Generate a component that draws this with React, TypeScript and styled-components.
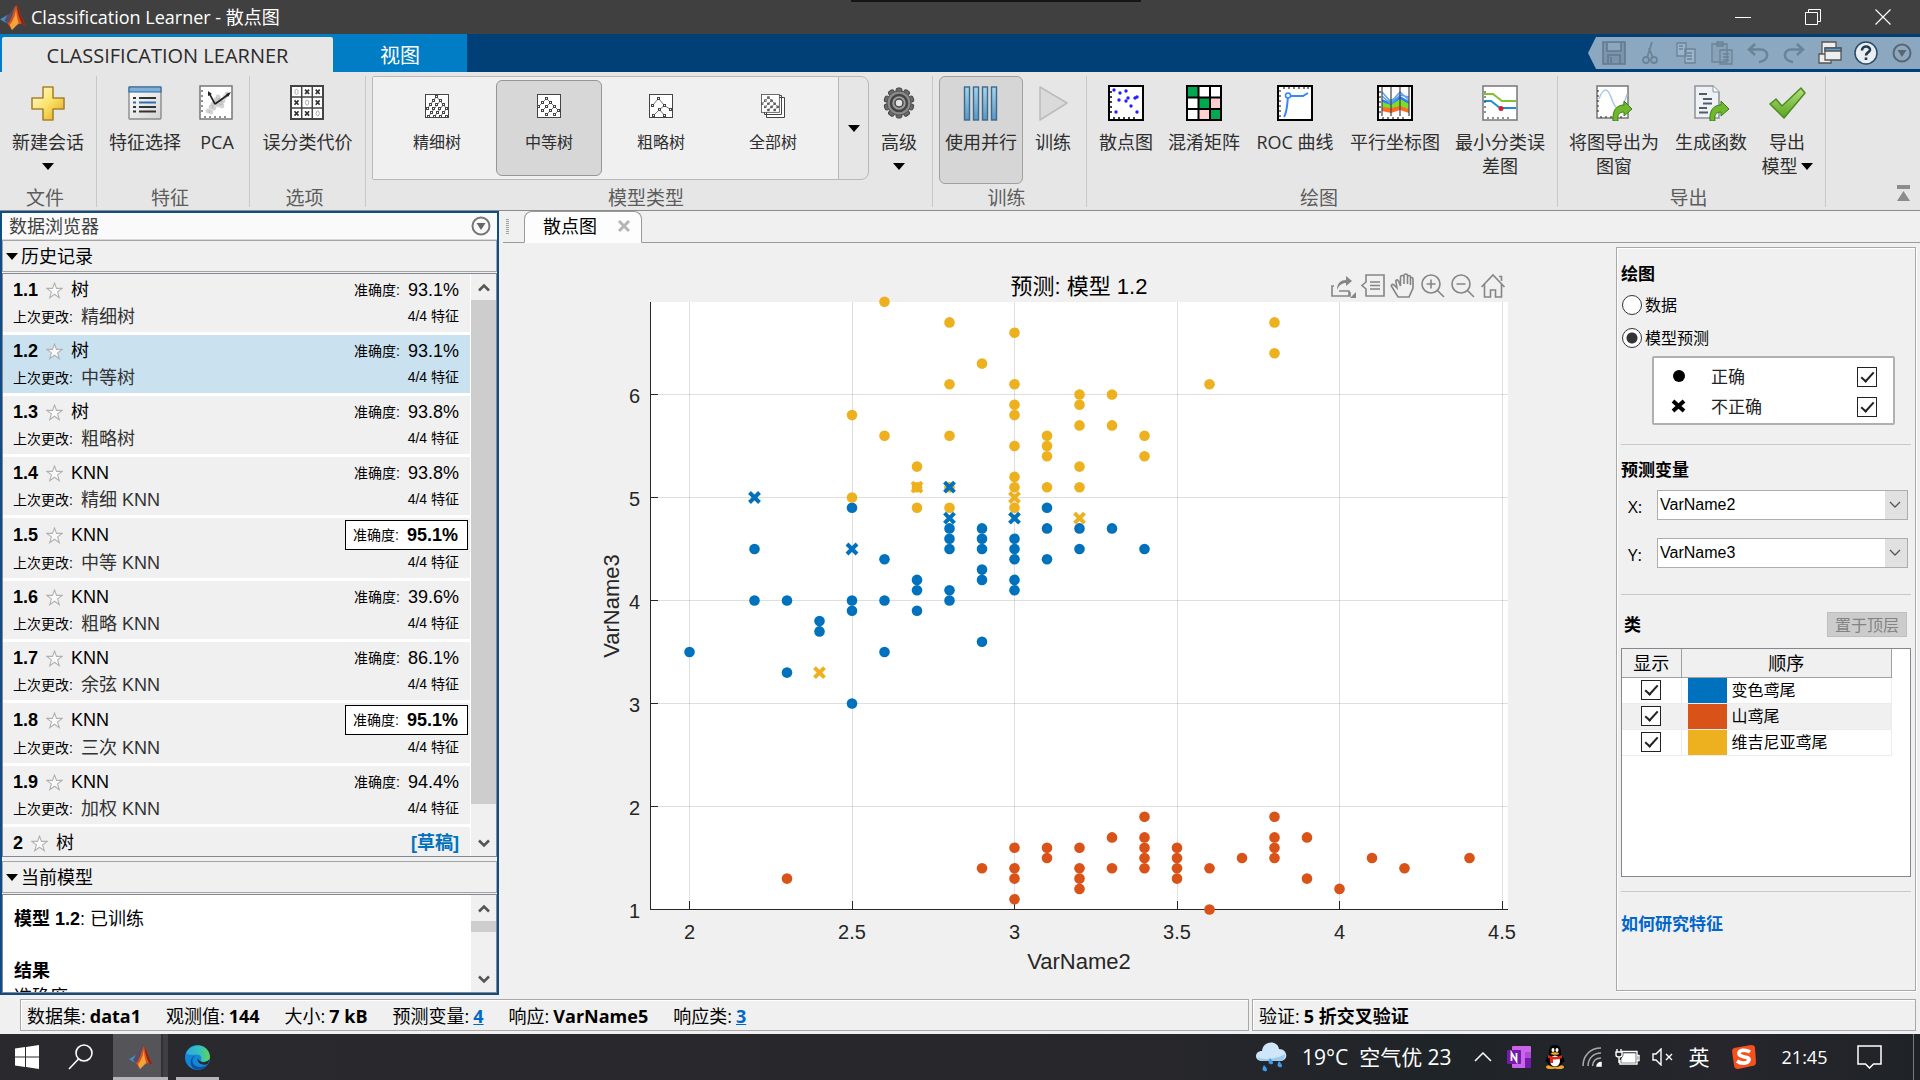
import React from "react";
import styled, { createGlobalStyle, css } from "styled-components";

const uiFont = `"Open Sans", "Noto Sans CJK SC", sans-serif`;
const arial = `"Liberation Sans", "Noto Sans CJK SC", sans-serif`;

const Global = createGlobalStyle`
  *, *::before, *::after { box-sizing: border-box; }
  body { margin: 0; background: #f0f0f0; font-family: ${uiFont}; color: #000; }
  button, input, select { font: inherit; color: inherit; margin: 0; }
  button { border: 0; background: none; padding: 0; cursor: default; }
  svg { display: block; flex: none; }
  ul, dl, dd, h1, h2, h3, p { margin: 0; padding: 0; list-style: none; font-weight: inherit; font-size: inherit; }
`;

/* ---------- window ---------- */
const Page = styled.div`
  display: flex;
  flex-direction: column;
  height: 100vh;
  overflow: hidden;
`;
const TitleBar = styled.header`
  display: flex;
  align-items: center;
  flex: none;
  height: 34px;
  padding-right: 2px;
  background: #404040;
  color: #fff;
  position: relative;
`;
const TopEdge = styled.span`
  position: absolute;
  top: 0;
  left: 50%;
  width: 290px;
  margin-left: -109px;
  height: 2px;
  background: #161616;
`;
const AppTitle = styled.h1`
  flex: 1;
  padding-left: 5px;
  font-size: 18px;
  line-height: 34px;
`;
const WindowButton = styled.button`
  display: grid;
  place-items: center;
  width: 70px;
  height: 34px;
`;

/* ---------- tab strip ---------- */
const TabStrip = styled.nav`
  display: flex;
  flex: none;
  height: 38px;
  background: #004076;
`;
const TabGroup = styled.div`
  display: flex;
  align-items: flex-end;
  width: 467px;
  padding-left: 2px;
  background: #007dc5;
`;
const RibbonTab = styled.button<{ $active?: boolean }>`
  width: ${(p) => (p.$active ? 331 : 134)}px;
  height: 35px;
  padding-top: 2px;
  font-size: 20px;
  line-height: 32px;
  white-space: nowrap;
  border-radius: 2px 2px 0 0;
  background: ${(p) => (p.$active ? "#e6e6e6" : "transparent")};
  color: ${(p) => (p.$active ? "#2b2b2b" : "#fff")};
`;
const QuickBar = styled.div`
  display: flex;
  align-items: center;
  gap: 12px;
  height: 32px;
  margin: 3px 0 0 auto;
  padding: 0 6px 0 14px;
  background: #8ba8c0;
  clip-path: polygon(8px 0, 100% 0, 100% 100%, 8px 100%, 0 50%);
`;

/* ---------- ribbon ---------- */
const Ribbon = styled.section`
  display: flex;
  flex: none;
  padding: 4px 0 3px;
  background: #e6e6e6;
  border-bottom: 1px solid #8c8c8c;
`;
const Group = styled.div`
  display: flex;
  flex-direction: column;
  flex: none;
  border-right: 1px solid #c8c8c8;
`;
const Items = styled.div<{ $left?: number; $right?: number }>`
  display: flex;
  height: 108px;
  padding: 0 ${(p) => p.$right ?? 0}px 0 ${(p) => p.$left ?? 0}px;
`;
const GroupLabel = styled.h2`
  height: 23px;
  padding-right: 6px;
  text-align: center;
  font-size: 19px;
  line-height: 28px;
  color: #5c5c5c;
`;
const Tool = styled.button<{ $w: number; $on?: boolean }>`
  display: flex;
  flex-direction: column;
  align-items: center;
  gap: 9px;
  width: ${(p) => p.$w}px;
  padding-top: ${(p) => (p.$on ? 8 : 9)}px;
  font-size: 18px;
  line-height: 24px;
  color: #2e2e2e;
  border-radius: 6px;
  ${(p) =>
    p.$on &&
    css`
      border: 1px solid #a0a0a0;
      background: #d6d6d6;
    `}
`;
const ToolText = styled.span`
  display: flex;
  flex-direction: column;
  align-items: center;
  white-space: nowrap;
`;
const Inline = styled.span`
  display: flex;
  align-items: center;
  gap: 3px;
`;
const Caret = styled.i<{ $tall?: boolean }>`
  border: 6px solid transparent;
  border-top: 7px solid #000;
  border-bottom: 0;
  margin: ${(p) => (p.$tall ? 9 : 0)}px 0;
`;
const Gallery = styled.div`
  display: flex;
  width: 497px;
  height: 104px;
  border: 1px solid #b8b8b8;
  border-radius: 2px 8px 8px 2px;
`;
const GalleryItems = styled.div`
  display: flex;
  flex: 1;
  gap: 6px;
  padding: 3px 0 3px 11px;
  background: #f0f0f0;
`;
const GalleryItem = styled.button<{ $on?: boolean }>`
  display: flex;
  flex-direction: column;
  align-items: center;
  gap: 12px;
  width: 106px;
  padding-top: 13px;
  border: 1px solid ${(p) => (p.$on ? "#969696" : "transparent")};
  border-radius: 6px;
  background: ${(p) => (p.$on ? "#d7d7d7" : "transparent")};
  font-size: 16px;
  line-height: 24px;
  color: #2e2e2e;
`;
const GalleryMore = styled.button`
  display: grid;
  place-items: center;
  width: 30px;
  border-left: 1px solid #b8b8b8;
`;
const Collapse = styled.button`
  align-self: flex-end;
  margin: 0 5px 4px auto;
`;

/* ---------- workspace ---------- */
const Workspace = styled.main`
  display: flex;
  flex: 1;
  min-height: 0;
`;
const Browser = styled.aside`
  display: flex;
  flex-direction: column;
  flex: none;
  width: 499px;
  border: 2px solid #134c84;
  background: #f0f0f0;
`;
const BrowserTitle = styled.div`
  display: flex;
  align-items: center;
  justify-content: space-between;
  flex: none;
  height: 27px;
  padding: 0 6px 0 7px;
  border-bottom: 1px solid #d8d8d8;
  background: #fafafa;
  font-size: 18px;
  line-height: 24px;
  color: #404040;
`;
const SectionHead = styled.button`
  display: flex;
  align-items: center;
  gap: 3px;
  flex: none;
  height: 32px;
  margin-bottom: 1px;
  padding-left: 3px;
  border: 1px solid #a4a4a4;
  font-size: 18px;
  line-height: 28px;
`;
const ScrollBox = styled.div<{ $grow?: boolean }>`
  display: flex;
  flex: ${(p) => (p.$grow ? "1" : "none")};
  min-height: 0;
  height: ${(p) => (p.$grow ? "auto" : "99px")};
  margin-bottom: ${(p) => (p.$grow ? "4px" : "0")};
  border: 1px solid #828790;
  background: #fff;
`;
const Scrollbar = styled.div`
  display: flex;
  flex-direction: column;
  align-items: stretch;
  width: 25px;
  margin-left: 1px;
  background: #f0f0f0;
`;
const ScrollButton = styled.button`
  display: grid;
  place-items: center;
  flex: none;
  height: 26px;
`;
const Track = styled.div`
  flex: 1;
`;
const Thumb = styled.div<{ $h: string }>`
  height: ${(p) => p.$h};
  background: #cdcdcd;
`;
const History = styled.ul`
  display: flex;
  flex-direction: column;
  gap: 3px;
  flex: 1;
  overflow: hidden;
  font-family: ${arial};
`;
const Row = styled.li<{ $selected?: boolean }>`
  flex: none;
  padding: 2px 11px 2px 10px;
  background: ${(p) => (p.$selected ? "#cae2f0" : "#f0f0f0")};
`;
const Line = styled.div<{ $second?: boolean }>`
  display: flex;
  align-items: center;
  justify-content: space-between;
  min-height: ${(p) => (p.$second ? 26 : 28)}px;
  line-height: 26px;
`;
const ModelName = styled.span`
  display: flex;
  align-items: center;
  gap: 8px;
  font-size: 18px;
`;
const Accuracy = styled.span<{ $best?: boolean }>`
  display: flex;
  align-items: center;
  gap: 8px;
  font-size: 14px;
  ${(p) =>
    p.$best &&
    css`
      height: 30px;
      margin-right: -9px;
      padding: 0 9px 0 7px;
      border: 1px solid #000;
      background: #fff;
    `}
  b, span { font-size: 18px; }
`;
const Change = styled.span`
  display: flex;
  align-items: center;
  gap: 8px;
  font-size: 14px;
  span { font-size: 18px; color: #333; }
`;
const Small = styled.span`
  font-size: 14px;
  line-height: 22px;
  padding-bottom: 3px;
`;
const Draft = styled.b`
  font-size: 18px;
  color: #0072bd;
`;
const Current = styled.div`
  flex: 1;
  overflow: hidden;
  padding: 11px 11px 0;
  font-family: ${arial};
  font-size: 18px;
  line-height: 26px;
  p + p { margin-top: 26px; }
`;

/* ---------- document area ---------- */
const Documents = styled.section`
  display: flex;
  flex-direction: column;
  flex: 1;
  min-width: 0;
`;
const DocTabs = styled.div`
  display: flex;
  flex: none;
  height: 32px;
  padding-left: 7px;
  background: linear-gradient(#9a9a9a, #9a9a9a) 4px 31px / 100% 1px no-repeat;
`;
const Grip = styled.span`
  width: 3px;
  height: 15px;
  margin: 8px 15px 0 0;
  background: repeating-linear-gradient(#a0a0a0 0 1px, transparent 1px 2px);
`;
const DocTab = styled.div`
  display: flex;
  align-items: center;
  gap: 20px;
  height: 32px;
  padding: 0 10px 2px 18px;
  border: 1px solid #9a9a9a;
  border-bottom-color: #fdfdfd;
  border-radius: 8px 8px 0 0;
  background: #fdfdfd;
  font-size: 18px;
  line-height: 26px;
`;
const DocBody = styled.div`
  display: flex;
  flex: 1;
  min-height: 0;
`;
const Figure = styled.figure`
  position: relative;
  flex: 1;
  min-width: 0;
  margin: 0;
`;
const Plot = styled.svg`
  width: 100%;
  height: 100%;
  font-family: ${arial};
  font-size: 20px;
  fill: #262626;
`;
const AxesTools = styled.div`
  position: absolute;
  top: 30px;
  right: 110px;
  display: flex;
  gap: 4px;
`;

/* ---------- options panel ---------- */
const Options = styled.aside`
  display: flex;
  flex-direction: column;
  flex: none;
  width: 300px;
  margin: 4px 4px 4px 0;
  padding: 14px 4px 0;
  border: 1px solid #a8a8a8;
  box-shadow: inset 1px 1px #fff, 1px 1px #fff;
  font-size: 16px;
  line-height: 24px;
`;
const Heading = styled.h3`
  font-size: 17px;
  font-weight: 700;
  line-height: 24px;
`;
const Choices = styled.div`
  padding: 2px 0 2px 1px;
`;
const Choice = styled.label`
  display: flex;
  align-items: center;
  gap: 3px;
  height: 33px;
`;
const Radio = styled.input.attrs({ type: "radio" })`
  appearance: none;
  width: 20px;
  height: 20px;
  border: 1px solid #333;
  border-radius: 50%;
  background: #fff;
  &:checked { background: radial-gradient(circle, #333 0 5px, #fff 6px); }
`;
const Tick = styled.input.attrs({ type: "checkbox" })`
  appearance: none;
  display: block;
  width: 20px;
  height: 20px;
  border: 1px solid #222;
  background: #fff;
  &:checked::after {
    content: "";
    display: block;
    width: 7px;
    height: 13px;
    margin: 1px 0 0 6px;
    border: solid #222;
    border-width: 0 2px 2px 0;
    transform: rotate(42deg);
  }
`;
const Legend = styled.div`
  display: flex;
  flex-direction: column;
  margin: 0 16px 19px 31px;
  padding: 4px 16px 1px 17px;
  border: 2px solid #b0b0b0;
  border-radius: 2px;
  background: #fff;
  font-size: 17px;
`;
const LegendItem = styled.label`
  display: flex;
  align-items: center;
  height: 30px;
  color: #222;
  span { flex: 1; padding-left: 24px; }
`;
const Rule = styled.hr`
  width: 100%;
  flex: none;
  height: 1px;
  margin: 0;
  border: 0;
  background: #c8c8c8;
`;
const Fields = styled.fieldset`
  min-width: 0;
  margin: 0;
  padding: 8px 3px 8px 7px;
  border: 0;
`;
const FieldsTitle = styled(Heading)`
  margin-top: 13px;
`;
const Field = styled.label`
  display: flex;
  align-items: center;
  height: 30px;
  margin-bottom: 18px;
`;
const FieldName = styled.span`
  width: 29px;
  padding-top: 4px;
  font-size: 17px;
`;
const SelectBox = styled.span`
  position: relative;
  flex: 1;
  svg { position: absolute; right: 7px; top: 10px; pointer-events: none; }
`;
const Select = styled.select`
  appearance: none;
  display: block;
  width: 100%;
  height: 30px;
  padding: 0 26px 0 2px;
  border: 1px solid #adadad;
  border-radius: 0;
  background: linear-gradient(90deg, #fff calc(100% - 22px), #e1e1e1 0);
  font-family: ${arial};
  font-size: 16px;
`;
const ClassHead = styled.div`
  display: flex;
  align-items: center;
  justify-content: space-between;
  margin: 17px 4px 11px 3px;
`;
const TopButton = styled.button`
  width: 80px;
  height: 25px;
  border: 1px solid #bfbfbf;
  background: #ccc;
  color: #838383;
  line-height: 22px;
`;
const TableBox = styled.div`
  height: 229px;
  margin-bottom: 14px;
  border: 1px solid #828790;
  background: #fff;
`;
const ClassTable = styled.table`
  width: 270px;
  border-collapse: collapse;
  table-layout: fixed;
  th {
    height: 28px;
    padding: 0;
    background: #f0f0f0;
    border-right: 1px solid #a0a0a0;
    border-bottom: 1px solid #a0a0a0;
    font-size: 18px;
    font-weight: 400;
    line-height: 26px;
  }
  th:first-child { width: 59px; }
  td {
    height: 26px;
    padding: 0;
    border-right: 1px solid #ececec;
    border-bottom: 1px solid #ececec;
    line-height: 22px;
  }
  tr:nth-child(even) td { background: #f0f0f0; }
  ${Tick} { margin: 0 auto; }
`;
const Swatch = styled.span<{ $c: string }>`
  width: 39px;
  height: 25px;
  margin: 0 5px 0 6px;
  background: ${(p) => p.$c};
`;
const ClassCell = styled.span`
  display: flex;
  align-items: center;
  height: 25px;
`;
const HelpLink = styled.a`
  margin-top: 20px;
  font-size: 17px;
  font-weight: 700;
  color: #0066cc;
  text-decoration: none;
`;

/* ---------- status bar ---------- */
const Status = styled.footer`
  display: flex;
  flex: none;
  gap: 3px;
  padding: 4px 4px 3px 20px;
  font-size: 18px;
  line-height: 32px;
`;
const StatusBox = styled.dl<{ $grow: number }>`
  display: flex;
  flex: ${(p) => p.$grow} 1 0;
  gap: 25px;
  height: 32px;
  padding: 0 6px;
  border: 1px solid #a8a8a8;
  box-shadow: inset 1px 1px #fff;
  white-space: nowrap;
`;
const Pair = styled.div`
  display: flex;
  gap: 4px;
  dd { font-weight: 700; }
  a { color: #0066cc; }
`;

/* ---------- taskbar ---------- */
const Taskbar = styled.footer`
  display: flex;
  align-items: stretch;
  flex: none;
  height: 46px;
  background: linear-gradient(90deg, #29292e, #27272c 60%, #1f2428 75%, #26262c 90%, #1f2327);
  color: #fff;
`;
const TaskButton = styled.button<{ $w: number; $on?: boolean }>`
  display: grid;
  place-items: center;
  width: ${(p) => p.$w}px;
  ${(p) =>
    p.$on &&
    css`
      margin-left: 5px;
      background: linear-gradient(90deg, #545459 48px, #323236 48px, #323236 50px, #404044 50px);
      box-shadow: inset 0 -3px #b5b5ba;
    `}
`;
const EdgeButton = styled(TaskButton)`
  margin-left: 8px;
  box-shadow: inset 0 -3px #b5b5ba;
`;
const Tray = styled.div`
  display: flex;
  align-items: center;
  margin-left: auto;
  font-size: 21px;
  line-height: 44px;
  white-space: nowrap;
`;
const Weather = styled.button`
  display: flex;
  align-items: center;
  gap: 15px;
  width: 207px;
`;
const TrayButton = styled.button<{ $w: number }>`
  display: grid;
  place-items: center;
  width: ${(p) => p.$w}px;
  height: 46px;
`;
const Clock = styled.time`
  width: 65px;
  margin-left: 3px;
  text-align: center;
  font-size: 18px;
`;
const ShowDesktop = styled.button`
  align-self: stretch;
  width: 7px;
  margin-left: 10px;
  border-left: 1px solid #77797c;
`;

/* ---------- drawings ---------- */
const Matlab = ({ s }: { s: number }) => (
  <svg width={s} height={s} viewBox="0 0 24 24">
    <path d="M0 14 7 10 11 13 7 18 3 16Z" fill="#3f8fc4" />
    <path d="M7 10C11 9 12 2 15 1L11 13 7 18 4 15Z" fill="#5b4a63" />
    <path d="M15 1C17 3 20 14 24 20L20 18 16 19 11 24 7 18C11 16 12 6 15 1Z" fill="#d9531e" />
    <path d="M15 1C17 3 20 14 24 20L20 18C17 12 16 6 15 1Z" fill="#8c2415" />
    <path d="M15 5C15 12 17 15 17 18L11 24 9 19C13 15 14 9 15 5Z" fill="#f2a33a" />
  </svg>
);
const Plus = () => (
  <svg width="36" height="36" viewBox="0 0 36 36">
    <defs>
      <linearGradient id="gold" x1="0" y1="0" x2="1" y2="1">
        <stop offset="0" stopColor="#fffbe0" />
        <stop offset=".5" stopColor="#fbe36a" />
        <stop offset="1" stopColor="#e2a512" />
      </linearGradient>
    </defs>
    <path d="M13 2H23V13H34V24H23V35H13V24H2V13H13Z" fill="url(#gold)" stroke="#a9822f" strokeWidth="1.6" strokeLinejoin="round" />
  </svg>
);
const FeatureList = () => (
  <svg width="36" height="36" viewBox="0 0 36 36">
    <defs>
      <linearGradient id="sheet" x1="0" y1="0" x2="1" y2="1">
        <stop offset="0" stopColor="#fff" />
        <stop offset="1" stopColor="#d4d4d4" />
      </linearGradient>
    </defs>
    <rect x="2" y="2" width="32" height="32" rx="1" fill="url(#sheet)" stroke="#8a8a8a" strokeWidth="1.4" />
    <rect x="2" y="2" width="32" height="5" fill="#7fb0dc" stroke="#2c6292" />
    {[13, 17.5, 22, 26.5].map((y, i) => (
      <path key={y} d={`M6 ${y}h3M12 ${y}h17`} stroke={i === 1 ? "#2d6fb0" : "#333"} strokeWidth="2" />
    ))}
  </svg>
);
const edgeTicks = "M4 6h2M4 11h2M4 16h2M4 21h2M4 26h2M8 33v-2M13 33v-2M18 33v-2M23 33v-2M28 33v-2";
const Pca = () => (
  <svg width="36" height="36" viewBox="0 0 36 36">
    <rect x="1" y="1" width="32" height="33" fill="#fff" stroke="#777" strokeWidth="1.5" />
    <g fill="#b0b0b0">
      {[[9, 26], [12, 22], [15, 23], [16, 18], [19, 20], [21, 15], [24, 16], [26, 12], [12, 27], [23, 21], [28, 9], [19, 12], [17, 15], [22, 18], [14, 19]].map(([x, y]) => (
        <circle key={`${x}-${y}`} cx={x} cy={y} r="2.4" opacity=".55" />
      ))}
    </g>
    <path d="M16 19 10 8M16 19 30 9" fill="none" stroke="#222" strokeWidth="1.6" />
    <path d="M9 6 13 9 9 11ZM32 7 29 12 27 9Z" fill="#222" />
    <path d={edgeTicks} transform="translate(-2)" stroke="#222" />
  </svg>
);
const CostGrid = () => (
  <svg width="36" height="36" viewBox="0 0 36 36">
    <rect x="1" y="1" width="32" height="33" fill="#fff" stroke="#444" strokeWidth="2" />
    <path d="M11.7 1V34M22.3 1V34M1 12H33M1 23H33" stroke="#444" strokeWidth="1.5" />
    {[0, 1, 2].flatMap((r) =>
      [0, 1, 2].map((c) =>
        r === c ? (
          <ellipse key={`${r}${c}`} cx={6.5 + c * 10.6} cy={6.8 + r * 10.8} rx="1.6" ry="2.5" fill="none" stroke="#aaa" />
        ) : (
          <path key={`${r}${c}`} d={`M${4.5 + c * 10.6} ${4.6 + r * 10.8}l4 4.4m0-4.400l-4 4.400`} stroke="#333" strokeWidth="1.7" />
        )
      )
    )}
  </svg>
);
const treeNodes: Record<string, number[][]> = {
  fine: [[11, 2], [8, 6], [15, 6], [5, 10], [11, 10], [18, 10], [2, 14], [8, 14], [14, 14], [21, 14], [6, 18], [12, 18], [18, 18], [3, 22], [9, 22], [15, 22], [21, 22]],
  medium: [[9, 4], [5, 8], [13, 8], [1, 12], [9, 12], [17, 12], [5, 16], [13, 16], [21, 16], [9, 20], [17, 20]],
  coarse: [[9, 4], [3, 11], [15, 11], [10, 15], [21, 15], [4, 21], [15, 21]],
};
const treeLinks: Record<string, string> = {
  fine: "M11 2 2 14M11 2 21 14M15 6 3 22M18 10 9 22M21 14 15 22",
  medium: "M9 4 1 12M9 4 21 16M13 8 5 16M17 12 9 20M21 16 17 20",
  coarse: "M9 4 3 11M9 4l6 7M15 11l6 4M15 11l-5 4M10 15l-6 6M10 15l5 6",
};
const TreeArt = ({ kind }: { kind: string }) => (
  <g>
    <rect x=".5" y=".5" width="23" height="23" fill="#fff" stroke="#444" />
    <path d={treeLinks[kind]} transform="translate(.5 .5)" stroke="#777" fill="none" />
    {treeNodes[kind].map(([x, y]) => (
      <rect key={`${x}-${y}`} x={x - 0.5} y={y - 0.5} width="2" height="2" fill="#fff" stroke="#444" />
    ))}
  </g>
);
const Tree = ({ kind }: { kind: string }) => (
  <svg width="24" height="24" viewBox="0 0 24 24" overflow="visible">
    {kind === "all" ? (
      <g>
        <path d="M5.5 3.500H23.500V23.500H5.500ZM3.500 1.500H20.500V20.500H3.500Z" fill="#fff" stroke="#444" />
        <g transform="scale(.78)"><TreeArt kind="medium" /></g>
      </g>
    ) : (
      <TreeArt kind={kind} />
    )}
  </svg>
);
const Gear = () => (
  <svg width="36" height="36" viewBox="0 0 36 36">
    <g fill="#6a6a6a" stroke="#444">
      {[0, 36, 72, 108, 144].map((a) => (
        <rect key={a} x="15" y="3" width="6" height="30" rx="2" transform={`rotate(${a} 18 18)`} />
      ))}
    </g>
    <circle cx="18" cy="18" r="12" fill="#8a8a8a" stroke="#555" />
    <circle cx="18" cy="18" r="8" fill="#9d9d9d" stroke="#444" strokeWidth="2.5" />
    <circle cx="18" cy="18" r="4" fill="#e4e4e4" stroke="#444" strokeWidth="1.5" />
  </svg>
);
const Parallel = () => (
  <svg width="36" height="36" viewBox="0 0 36 36">
    <defs>
      <linearGradient id="steel" x1="0" y1="0" x2="0" y2="1">
        <stop offset="0" stopColor="#a9d3ee" />
        <stop offset="1" stopColor="#5b97c0" />
      </linearGradient>
    </defs>
    {[1.5, 10.5, 19.5, 28.5].map((x) => (
      <rect key={x} x={x} y="2" width="5" height="33" fill="url(#steel)" stroke="#3a6a8e" strokeWidth="1.4" />
    ))}
  </svg>
);
const Play = () => (
  <svg width="36" height="36" viewBox="0 0 36 36">
    <path d="M5 2 32 18 5 35Z" fill="#dadada" stroke="#bcbcbc" strokeWidth="1.5" strokeLinejoin="round" />
  </svg>
);
const ScatterIcon = () => (
  <svg width="36" height="36" viewBox="0 0 36 36">
    <rect x="1" y="1" width="34" height="34" fill="#fff" stroke="#000" strokeWidth="2" />
    <g fill="#2020ff">
      {[[6, 5], [12, 8], [18, 6], [11, 15], [18, 16], [20, 13], [27, 13], [29, 12], [23, 21], [8, 27], [29, 27]].map(([x, y]) => (
        <circle key={`${x}-${y}`} cx={x} cy={y} r="1.7" />
      ))}
    </g>
    <path d={edgeTicks} transform="translate(-2 1)" stroke="#000" strokeWidth="1.5" />
  </svg>
);
const Confusion = () => (
  <svg width="36" height="36" viewBox="0 0 36 36">
    <rect x="1" y="1" width="34" height="34" fill="#fff" />
    <path d="M1 1h11v11H1zM12 12h12v12H12zM24 24h11v11H24z" fill="#00a94f" />
    <path d="M24 12h11v12H24zM12 24h12v11H12z" fill="#ffd0d0" />
    <path d="M1 1H35V35H1ZM12.500 1V35M24 1V35M1 12.500H35M1 24H35" fill="none" stroke="#000" strokeWidth="2" />
  </svg>
);
const Roc = () => (
  <svg width="36" height="36" viewBox="0 0 36 36">
    <rect x="1" y="1" width="34" height="34" fill="#fff" stroke="#000" strokeWidth="2" />
    <path d="M7 32C10 28 10 20 11 12M13 11H26L31 8" fill="none" stroke="#3388ff" strokeWidth="2" />
    <circle cx="11" cy="10.500" r="2.500" fill="#fff" stroke="#3388ff" strokeWidth="1.5" />
    <path d="M2 6h2M2 11h2M2 16h2M2 21h2M2 26h2M2 31h2M7 2v2M12 2v2M17 2v2M22 2v2M27 2v2M31 2v2" stroke="#000" />
  </svg>
);
const ParallelPlot = () => (
  <svg width="36" height="36" viewBox="0 0 36 36">
    <rect x="1" y="1" width="34" height="34" fill="#fff" stroke="#000" strokeWidth="2" />
    <path d="M5 22 14 16 23 13 32 21V28L23 25 14 28 5 26Z" fill="#ff6a2b" />
    <path d="M5 18 14 14 23 12 32 18V24L23 21 14 23 5 22Z" fill="#7be024" />
    <path d="M5 14 14 18 23 11 32 16V19L23 14 14 20 5 17Z" fill="#2b7cff" />
    <path d="M5 7 14 17 23 7 32 15M5 11 14 19 23 10 32 12" fill="none" stroke="#5a9bff" strokeWidth="1.5" />
    <path d="M5 2V31M14 2V31M23 2V31M32 2V31" stroke="#444" strokeWidth="1.2" />
    <path d={edgeTicks} transform="translate(-2 1)" stroke="#000" />
  </svg>
);
const MinError = () => (
  <svg width="36" height="36" viewBox="0 0 36 36">
    <rect x="1" y="1" width="34" height="34" fill="#fff" stroke="#777" strokeWidth="1.5" />
    <path d="M2 9H11L20 16H34" fill="none" stroke="#86bf30" strokeWidth="2" />
    <path d="M2 16H9L18 23H34" fill="none" stroke="#1b90cf" strokeWidth="2" />
    <circle cx="19" cy="23.500" r="2.500" fill="#d32030" />
    <path d={edgeTicks} transform="translate(-2 1)" stroke="#222" />
  </svg>
);
const GreenArrow = () => (
  <path d="M17 36C16 25 21 20 28 20V16L36 24 28 31V27C23 27 21 30 22 36Z" fill="#6fb82e" stroke="#3c7d17" strokeLinejoin="round" />
);
const ExportPlot = () => (
  <svg width="37" height="36" viewBox="0 0 37 36">
    <rect x="1" y="1" width="31" height="32" fill="#fff" stroke="#777" strokeWidth="1.5" />
    <path d="M3 14C7 3 11 2 15 12 18 21 21 25 24 23S29 17 31 9" fill="none" stroke="#a9c8e8" strokeWidth="1.5" />
    <path d={edgeTicks} transform="translate(-3)" stroke="#222" />
    <GreenArrow />
  </svg>
);
const ExportCode = () => (
  <svg width="37" height="36" viewBox="0 0 37 36">
    <path d="M2 1H20L26 7V33H2Z" fill="#eef2f6" stroke="#8b939b" strokeWidth="1.5" />
    <path d="M20 1V7H26" fill="#fff" stroke="#8b939b" />
    <path d="M6 9h8M10 14h9M10 18.500h9M6 23h8M6 27.500h9" stroke="#555c66" strokeWidth="1.8" />
    <GreenArrow />
  </svg>
);
const Check = () => (
  <svg width="38" height="36" viewBox="0 0 38 36">
    <defs>
      <linearGradient id="leaf" x1="0" y1="0" x2="0" y2="1">
        <stop offset="0" stopColor="#b4e07a" />
        <stop offset="1" stopColor="#58a51f" />
      </linearGradient>
    </defs>
    <path d="M2 19 8 14 14 21 33 3 37 8 16 33Z" fill="url(#leaf)" stroke="#4b8a24" strokeWidth="1.5" strokeLinejoin="round" />
  </svg>
);
const Chevron = ({ up }: { up?: boolean }) => (
  <svg width="12" height="9" viewBox="0 0 12 9">
    <path d={up ? "M1 7.500 6 2.500 11 7.500" : "M1 1.500 6 6.500 11 1.500"} fill="none" stroke="#555" strokeWidth="2.6" />
  </svg>
);
const Star = () => (
  <svg width="17" height="17" viewBox="0 0 16 16">
    <path d="M8 1 9.900 6H15.200L10.900 9.300 12.500 14.800 8 11.500 3.500 14.800 5.100 9.300.8 6H6.100Z" fill="#fafafa" stroke="#b0b0b0" />
  </svg>
);
const RoundDown = () => (
  <svg width="20" height="20" viewBox="0 0 20 20">
    <circle cx="10" cy="10" r="8.500" fill="none" stroke="#777" strokeWidth="2" />
    <path d="M5.500 7H14.500L10 14Z" fill="#666" />
  </svg>
);

const quick: [string, React.ReactNode][] = [
  ["保存", <path d="M1 1H23V23H1ZM5 2V10H19V2M6 23V14H18V23M9 16V22" fill="#7d95aa" stroke="#60798f" strokeWidth="1.5" />],
  ["剪切", <g fill="none" stroke="#6b8398" strokeWidth="1.8"><path d="M14 1 9 17M11 7 15 17" /><circle cx="8" cy="19" r="3" /><circle cx="16" cy="19" r="3" /></g>],
  ["复制", <g fill="#9db5c9" stroke="#6b8398" strokeWidth="1.3"><path d="M3 2h9v13H3zM11 8h10v14H11zM5 5h4M5 8h4M13 12h5M13 15h5M13 18h5" /></g>],
  ["粘贴", <g fill="#8aa2b7" stroke="#6b8398" strokeWidth="1.3"><path d="M2 3h15v18H2zM7 1h6v4H7zM10 9h12v14H10z" /><path d="M13 13h6M13 16h6M13 19h6" /></g>],
  ["撤销", <path d="M9 3 3 8.500 9 14M4 8.500H15C23 8.500 24 20 13 21" fill="none" stroke="#6b8398" strokeWidth="2.5" />],
  ["重做", <path d="M15 3 21 8.500 15 14M20 8.500H9C1 8.500 0 20 11 21" fill="none" stroke="#6b8398" strokeWidth="2.5" />],
  ["切换窗口", <g fill="#eee" stroke="#555" strokeWidth="1.3"><path d="M4 1h14v12H4zM1 13h12v9H1z" /><path d="M7 7h16v12H7z" /><path d="M7 7h16v3H7z" fill="#5b9bd5" /></g>],
  ["帮助", <g><circle cx="12" cy="12" r="11" fill="#e9eef3" stroke="#2b4a66" strokeWidth="1.5" /><path d="M8 9.500C8 4 16.500 4.500 16 9 15.500 11.500 12 11.500 12 14.500M12 16.500V19" fill="none" stroke="#23384d" strokeWidth="2.6" /></g>],
  ["更多", <g><circle cx="12" cy="12" r="8.500" fill="none" stroke="#5c6670" strokeWidth="2" /><path d="M7.500 9H16.500L12 16Z" fill="#5c6670" /></g>],
];

const axesIcons: [string, React.ReactNode][] = [
  ["导出", <g><path d="M4 13H2V23H20V19M9 18H19V23" fill="none" /><path d="M7 17C7 10 11 7 16 7V3L22 8 16 13V10C12 10 9 12 7 17Z" fill="#858585" stroke="none" /><path d="M26 19V25H20Z" fill="#858585" stroke="none" /></g>],
  ["数据提示", <path d="M6 2H24V23H6V16L2 12.500 6 9ZM10 9H20M10 12.500H20M10 16H20" fill="none" />],
  ["平移", <path d="M8 24H19L23 15V6C23 4 20.500 4 20.500 6V12 4C20.500 2 17.500 2 17.500 4V11 2.500C17.500.5 14 .5 14 2.500V11 4C14 2 10.500 2 10.500 4V13L8.500 8C7.500 6 5 7 6 9L7 15 4 12C2 10.500.5 12.500 2 14Z" fill="none" />],
  ["放大", <g fill="none"><circle cx="11" cy="11" r="9" /><path d="M17.500 17.500 24 24M6.500 11H15.500M11 6.500V15.500" /></g>],
  ["缩小", <g fill="none"><circle cx="11" cy="11" r="9" /><path d="M17.500 17.500 24 24M6.500 11H15.500" /></g>],
  ["还原视图", <path d="M1.500 14 13 2 24.500 14M4.500 11V24H10.500V17H15.500V24H21.500V11M19 3.500H21.500V8" fill="none" />],
];

/* ---------- data ---------- */
const blue = "#0072bd";
const orange = "#d95319";
const yellow = "#edb120";
type Column = [number, number[]];
const versicolor: Column[] = [
  [2, [3.5]], [2.2, [4.5, 4]], [2.3, [4, 3.3]], [2.4, [3.8, 3.7]], [2.5, [4.9, 4, 3.9, 3]], [2.6, [4.4, 4, 3.5]],
  [2.7, [4.2, 4.1, 3.9]], [2.8, [4.7, 4.6, 4.5, 4.1, 4]], [2.9, [4.7, 4.6, 4.5, 4.3, 4.2, 3.6]],
  [3, [4.6, 4.5, 4.4, 4.2, 4.1]], [3.1, [4.9, 4.7, 4.4]], [3.2, [4.7, 4.5]], [3.3, [4.7]], [3.4, [4.5]],
];
const setosa: Column[] = [
  [2.3, [1.3]], [2.9, [1.4]], [3, [1.6, 1.4, 1.3, 1.1]], [3.1, [1.6, 1.5]], [3.2, [1.6, 1.4, 1.3, 1.2]], [3.3, [1.7, 1.4]],
  [3.4, [1.9, 1.7, 1.6, 1.5, 1.4]], [3.5, [1.6, 1.5, 1.4, 1.3]], [3.6, [1.4, 1]], [3.7, [1.5]], [3.8, [1.9, 1.7, 1.6, 1.5]],
  [3.9, [1.7, 1.3]], [4, [1.2]], [4.1, [1.5]], [4.2, [1.4]], [4.4, [1.5]],
];
const virginica: Column[] = [
  [2.5, [5.8, 5]], [2.6, [6.9, 5.6]], [2.7, [5.3, 5.1, 4.9]], [2.8, [6.7, 6.1, 5.6, 5.1, 4.9]], [2.9, [6.3]],
  [3, [6.6, 6.1, 5.9, 5.8, 5.5, 5.2, 5.1, 4.9]], [3.1, [5.6, 5.5, 5.4, 5.1]], [3.2, [6, 5.9, 5.7, 5.3, 5.1]],
  [3.3, [6, 5.7]], [3.4, [5.6, 5.4]], [3.6, [6.1]], [3.8, [6.7, 6.4]],
];
const wrongBlue: Column[] = [[2.2, [5]], [2.5, [4.5]], [2.8, [5.1, 4.8]], [3, [4.8]]];
const wrongYellow: Column[] = [[2.4, [3.3]], [2.7, [5.1]], [3, [5]], [3.2, [4.8]]];

const px = (v: number) => 190.5 + (v - 2) * 325;
const py = (v: number) => 666.5 - (v - 1) * 103;

const Dots = ({ data, color }: { data: Column[]; color: string }) => (
  <g fill={color}>
    {data.flatMap(([x, ys]) => ys.map((y) => <circle key={`${x}-${y}`} cx={px(x)} cy={py(y)} r="5.3" />))}
  </g>
);
const Crosses = ({ data, color }: { data: Column[]; color: string }) => (
  <g stroke={color} strokeWidth="4">
    {data.flatMap(([x, ys]) =>
      ys.map((y) => <path key={`${x}-${y}`} d={`M${px(x) - 5} ${py(y) - 5}l10 10m0-10l-10 10`} />)
    )}
  </g>
);

const ScatterPlot = () => (
  <Plot viewBox="0 0 1117 752" role="img" aria-label="预测: 模型 1.2">
    <rect x="151" y="59" width="858" height="607" fill="#fff" />
    <g stroke="#262626" strokeOpacity=".15" shapeRendering="crispEdges">
      {[2, 2.5, 3, 3.5, 4, 4.5].map((v) => <path key={v} d={`M${px(v)} 59V666`} />)}
      {[2, 3, 4, 5, 6].map((v) => <path key={v} d={`M151 ${py(v)}H1009`} />)}
    </g>
    <g stroke="#262626" shapeRendering="crispEdges" fill="none">
      <path d="M151.500 59V666.500H1009" />
      {[2, 2.5, 3, 3.5, 4, 4.5].map((v) => <path key={v} d={`M${px(v)} 666v-8`} />)}
      {[2, 3, 4, 5, 6].map((v) => <path key={v} d={`M151 ${py(v)}h8`} />)}
    </g>
    {[2, 2.5, 3, 3.5, 4, 4.5].map((v) => <text key={v} x={px(v)} y="696" textAnchor="middle">{v}</text>)}
    {[1, 2, 3, 4, 5, 6].map((v) => <text key={v} x="141" y={py(v) + 8} textAnchor="end">{v}</text>)}
    <text x="580" y="51" textAnchor="middle" fontSize="22" fill="#000">预测: 模型 1.2</text>
    <text x="580" y="726" textAnchor="middle" fontSize="22">VarName2</text>
    <text transform="translate(120 363) rotate(-90)" textAnchor="middle" fontSize="22">VarName3</text>
    <Dots data={versicolor} color={blue} />
    <Dots data={setosa} color={orange} />
    <Dots data={virginica} color={yellow} />
    <Crosses data={wrongBlue} color={blue} />
    <Crosses data={wrongYellow} color={yellow} />
  </Plot>
);

const models = [
  { id: "1.1", type: "树", preset: "精细树", acc: "93.1%" },
  { id: "1.2", type: "树", preset: "中等树", acc: "93.1%", selected: true },
  { id: "1.3", type: "树", preset: "粗略树", acc: "93.8%" },
  { id: "1.4", type: "KNN", preset: "精细 KNN", acc: "93.8%" },
  { id: "1.5", type: "KNN", preset: "中等 KNN", acc: "95.1%", best: true },
  { id: "1.6", type: "KNN", preset: "粗略 KNN", acc: "39.6%" },
  { id: "1.7", type: "KNN", preset: "余弦 KNN", acc: "86.1%" },
  { id: "1.8", type: "KNN", preset: "三次 KNN", acc: "95.1%", best: true },
  { id: "1.9", type: "KNN", preset: "加权 KNN", acc: "94.4%" },
];
const classes = [
  { name: "变色鸢尾", color: blue },
  { name: "山鸢尾", color: orange },
  { name: "维吉尼亚鸢尾", color: yellow },
];
const variables = ["VarName2", "VarName3"];

const Scroll = ({ size }: { size: string }) => (
  <Scrollbar>
    <ScrollButton aria-label="向上滚动"><Chevron up /></ScrollButton>
    <Track><Thumb $h={size} /></Track>
    <ScrollButton aria-label="向下滚动"><Chevron /></ScrollButton>
  </Scrollbar>
);

const RibbonTool = ({ icon, w, lines, on, caret }: { icon: React.ReactNode; w: number; lines: string[]; on?: boolean; caret?: boolean }) => (
  <Tool $w={w} $on={on}>
    {icon}
    <ToolText>
      {lines.map((l) => <span key={l}>{l}</span>)}
      {caret && <Caret $tall />}
    </ToolText>
  </Tool>
);

const VariableField = ({ label, value }: { label: string; value: string }) => (
  <Field>
    <FieldName>{label}</FieldName>
    <SelectBox>
      <Select defaultValue={value}>{variables.map((v) => <option key={v}>{v}</option>)}</Select>
      <svg width="12" height="9"><path d="M1 2 6 7 11 2" fill="none" stroke="#555" strokeWidth="1.3" /></svg>
    </SelectBox>
  </Field>
);

export default function App() {
  return (
    <Page>
      <Global />
      <TitleBar>
        <TopEdge />
        <Matlab s={26} />
        <AppTitle>Classification Learner - 散点图</AppTitle>
        <WindowButton aria-label="最小化">
          <svg width="16" height="16"><path d="M0 8.500H16" stroke="#fff" /></svg>
        </WindowButton>
        <WindowButton aria-label="还原">
          <svg width="16" height="16" fill="none" stroke="#fff"><path d="M.5 3.500H12.500V15.500H.5ZM3.500 3.500V.5H15.500V12.500H12.500" /></svg>
        </WindowButton>
        <WindowButton aria-label="关闭">
          <svg width="16" height="16"><path d="M.5.5 15.500 15.500M15.500.5.5 15.500" stroke="#fff" strokeWidth="1.2" /></svg>
        </WindowButton>
      </TitleBar>

      <TabStrip>
        <TabGroup>
          <RibbonTab $active>CLASSIFICATION LEARNER</RibbonTab>
          <RibbonTab>视图</RibbonTab>
        </TabGroup>
        <QuickBar>
          {quick.map(([name, art]) => (
            <button key={name} aria-label={name}><svg width="24" height="24" viewBox="0 0 24 24">{art}</svg></button>
          ))}
        </QuickBar>
      </TabStrip>

      <Ribbon>
        <Group>
          <Items><RibbonTool icon={<Plus />} w={96} lines={["新建会话"]} caret /></Items>
          <GroupLabel>文件</GroupLabel>
        </Group>
        <Group>
          <Items $left={4} $right={4}>
            <RibbonTool icon={<FeatureList />} w={88} lines={["特征选择"]} />
            <RibbonTool icon={<Pca />} w={56} lines={["PCA"]} />
          </Items>
          <GroupLabel>特征</GroupLabel>
        </Group>
        <Group>
          <Items><RibbonTool icon={<CostGrid />} w={115} lines={["误分类代价"]} /></Items>
          <GroupLabel>选项</GroupLabel>
        </Group>
        <Group>
          <Items $left={6} $right={3}>
            <Gallery>
              <GalleryItems>
                <GalleryItem><Tree kind="fine" />精细树</GalleryItem>
                <GalleryItem $on><Tree kind="medium" />中等树</GalleryItem>
                <GalleryItem><Tree kind="coarse" />粗略树</GalleryItem>
                <GalleryItem><Tree kind="all" />全部树</GalleryItem>
              </GalleryItems>
              <GalleryMore aria-label="更多模型"><Caret /></GalleryMore>
            </Gallery>
            <RibbonTool icon={<Gear />} w={60} lines={["高级"]} caret />
          </Items>
          <GroupLabel>模型类型</GroupLabel>
        </Group>
        <Group>
          <Items $left={6} $right={3}>
            <RibbonTool icon={<Parallel />} w={84} lines={["使用并行"]} on />
            <RibbonTool icon={<Play />} w={60} lines={["训练"]} />
          </Items>
          <GroupLabel>训练</GroupLabel>
        </Group>
        <Group>
          <Items $left={4} $right={4}>
            <RibbonTool icon={<ScatterIcon />} w={70} lines={["散点图"]} />
            <RibbonTool icon={<Confusion />} w={86} lines={["混淆矩阵"]} />
            <RibbonTool icon={<Roc />} w={96} lines={["ROC 曲线"]} />
            <RibbonTool icon={<ParallelPlot />} w={104} lines={["平行坐标图"]} />
            <RibbonTool icon={<MinError />} w={106} lines={["最小分类误", "差图"]} />
          </Items>
          <GroupLabel>绘图</GroupLabel>
        </Group>
        <Group>
          <Items $left={4} $right={7}>
            <RibbonTool icon={<ExportPlot />} w={104} lines={["将图导出为", "图窗"]} />
            <RibbonTool icon={<ExportCode />} w={90} lines={["生成函数"]} />
            <Tool $w={62}>
              <Check />
              <ToolText><span>导出</span><Inline>模型<Caret /></Inline></ToolText>
            </Tool>
          </Items>
          <GroupLabel>导出</GroupLabel>
        </Group>
        <Collapse aria-label="收起">
          <svg width="24" height="18"><path d="M6 0H19V4H6ZM12.500 6 19 16H6Z" fill="#8c8c8c" /></svg>
        </Collapse>
      </Ribbon>

      <Workspace>
        <Browser>
          <BrowserTitle>数据浏览器<button aria-label="选项"><RoundDown /></button></BrowserTitle>
          <SectionHead><Caret />历史记录</SectionHead>
          <ScrollBox $grow>
            <History>
              {models.map((m) => (
                <Row key={m.id} $selected={m.selected}>
                  <Line>
                    <ModelName><b>{m.id}</b><Star />{m.type}</ModelName>
                    <Accuracy $best={m.best}>准确度:{m.best ? <b>{m.acc}</b> : <span>{m.acc}</span>}</Accuracy>
                  </Line>
                  <Line $second>
                    <Change>上次更改:<span>{m.preset}</span></Change>
                    <Small>4/4 特征</Small>
                  </Line>
                </Row>
              ))}
              <Row>
                <Line>
                  <ModelName><b>2</b><Star />树</ModelName>
                  <Draft>[草稿]</Draft>
                </Line>
                <Line $second />
              </Row>
            </History>
            <Scroll size="95%" />
          </ScrollBox>
          <SectionHead><Caret />当前模型</SectionHead>
          <ScrollBox>
            <Current>
              <p><b>模型 1.2</b>: 已训练</p>
              <p><b>结果</b></p>
              <div>准确度</div>
            </Current>
            <Scroll size="11px" />
          </ScrollBox>
        </Browser>

        <Documents>
          <DocTabs>
            <Grip />
            <DocTab>
              散点图
              <button aria-label="关闭散点图">
                <svg width="14" height="14"><path d="M2 2 12 12M12 2 2 12" stroke="#b5b5b5" strokeWidth="3" /></svg>
              </button>
            </DocTab>
          </DocTabs>
          <DocBody>
            <Figure>
              <ScatterPlot />
              <AxesTools>
                {axesIcons.map(([name, art]) => (
                  <button key={name} aria-label={name}>
                    <svg width="26" height="26" viewBox="0 0 26 26" stroke="#858585" strokeWidth="1.6">{art}</svg>
                  </button>
                ))}
              </AxesTools>
            </Figure>
            <Options>
              <Heading>绘图</Heading>
              <Choices>
                <Choice><Radio name="plot" />数据</Choice>
                <Choice><Radio name="plot" defaultChecked />模型预测</Choice>
              </Choices>
              <Legend>
                <LegendItem>
                  <svg width="16" height="16"><circle cx="8" cy="7" r="6" /></svg>
                  <span>正确</span><Tick defaultChecked />
                </LegendItem>
                <LegendItem>
                  <svg width="16" height="16"><path d="M2 2 13 12M13 2 2 12" stroke="#000" strokeWidth="4" /></svg>
                  <span>不正确</span><Tick defaultChecked />
                </LegendItem>
              </Legend>
              <Rule />
              <FieldsTitle>预测变量</FieldsTitle>
              <Fields>
                <VariableField label="X:" value="VarName2" />
                <VariableField label="Y:" value="VarName3" />
              </Fields>
              <Rule />
              <ClassHead><Heading>类</Heading><TopButton disabled>置于顶层</TopButton></ClassHead>
              <TableBox>
                <ClassTable>
                  <thead><tr><th>显示</th><th>顺序</th></tr></thead>
                  <tbody>
                    {classes.map((c) => (
                      <tr key={c.name}>
                        <td><Tick defaultChecked aria-label={c.name} /></td>
                        <td><ClassCell><Swatch $c={c.color} />{c.name}</ClassCell></td>
                      </tr>
                    ))}
                  </tbody>
                </ClassTable>
              </TableBox>
              <Rule />
              <HelpLink href="#features">如何研究特征</HelpLink>
            </Options>
          </DocBody>
        </Documents>
      </Workspace>

      <Status>
        <StatusBox $grow={1215}>
          <Pair><dt>数据集:</dt><dd>data1</dd></Pair>
          <Pair><dt>观测值:</dt><dd>144</dd></Pair>
          <Pair><dt>大小:</dt><dd>7 kB</dd></Pair>
          <Pair><dt>预测变量:</dt><dd><a href="#predictors">4</a></dd></Pair>
          <Pair><dt>响应:</dt><dd>VarName5</dd></Pair>
          <Pair><dt>响应类:</dt><dd><a href="#classes">3</a></dd></Pair>
        </StatusBox>
        <StatusBox $grow={650}>
          <Pair><dt>验证:</dt><dd>5 折交叉验证</dd></Pair>
        </StatusBox>
      </Status>

      <Taskbar>
        <TaskButton $w={54} aria-label="开始">
          <svg width="24" height="24" fill="#fff"><path d="M0 3.500 10 2V11.500H0ZM11 2 24 0V11.500H11ZM0 12.500H10V22L0 20.500ZM11 12.500H24V24L11 22Z" /></svg>
        </TaskButton>
        <TaskButton $w={54} aria-label="搜索">
          <svg width="26" height="26" fill="none" stroke="#fff" strokeWidth="1.6"><circle cx="16" cy="9" r="8" /><path d="M10.500 15 1 25" /></svg>
        </TaskButton>
        <TaskButton $w={55} $on aria-label="MATLAB"><Matlab s={24} /></TaskButton>
        <EdgeButton $w={43} aria-label="Edge">
          <svg width="25" height="25" viewBox="0 0 24 24">
            <defs>
              <linearGradient id="edgeTop"><stop offset="0" stopColor="#2fa8e0" /><stop offset=".6" stopColor="#35c3b5" /><stop offset="1" stopColor="#62d64e" /></linearGradient>
            </defs>
            <circle cx="12" cy="12" r="12" fill="#1287d8" />
            <path d="M1 8C5-2 22-3 24 11 24 16 18 17 15 15 17 12 15 9 11 9 7 9 3 10 1 8Z" fill="url(#edgeTop)" />
            <path d="M10 10C4 14 8 22 15 21 19 21 21 19 22 18 19 23 13 25 9 23 4 20 4 12 10 10Z" fill="#0f4f9e" />
            <path d="M14 15C18 18 22 16 24 13L22 18C19 20 12 19 12 13Z" fill="#29292e" />
          </svg>
        </EdgeButton>
        <Tray>
          <Weather>
            <svg width="32" height="32" viewBox="0 0 32 32">
              <path d="M7 20C-1 20-1 10 7 10 8-1 23-1 24 8 33 8 34 20 25 20Z" fill="#cfe6f8" />
              <path d="M3 16C8 20 25 17 30 13 30 18 28 20 25 20H7C5 20 3 18 3 16Z" fill="#9ccbef" />
              <path d="M15 17q-3 5 0 6t3-1q0-2-3-5M24 20q-3 5 0 6t3-1q0-2-3-5M9 24q-3 5 0 6t3-1q0-2-3-5" fill="#3d9df0" />
            </svg>
            <span>19°C&nbsp; 空气优 23</span>
          </Weather>
          <TrayButton $w={42} aria-label="显示隐藏的图标">
            <svg width="18" height="10"><path d="M1 9 9 1 17 9" fill="none" stroke="#fff" strokeWidth="1.5" /></svg>
          </TrayButton>
          <TrayButton $w={30} aria-label="OneNote">
            <svg width="24" height="22" viewBox="0 0 24 22">
              <rect x="5" width="19" height="22" rx="1" fill="#ca64ea" /><rect x="18" y="6" width="6" height="6" fill="#ae4bd5" /><rect x="18" y="12" width="6" height="10" fill="#7719aa" />
              <rect y="4" width="14" height="14" rx="1" fill="#7719aa" /><path d="M4.500 15V7L9.500 15V7" fill="none" stroke="#fff" strokeWidth="1.8" />
            </svg>
          </TrayButton>
          <TrayButton $w={42} aria-label="QQ">
            <svg width="20" height="24" viewBox="0 0 20 24">
              <ellipse cx="6" cy="22" rx="5" ry="2" fill="#f5a623" /><ellipse cx="14" cy="22" rx="5" ry="2" fill="#f5a623" />
              <path d="M10 0C4 0 4 5 4 9 0 14 0 18 2 17 3 20 6 22 10 22S17 20 18 17C20 18 20 14 16 9 16 5 16 0 10 0Z" fill="#050505" />
              <ellipse cx="10" cy="16" rx="5" ry="5.500" fill="#fff" /><ellipse cx="8" cy="5" rx="1.500" ry="2" fill="#fff" /><ellipse cx="12" cy="5" rx="1.500" ry="2" fill="#fff" />
              <ellipse cx="10" cy="8.500" rx="4" ry="1.300" fill="#f5a623" /><path d="M3 10Q10 14 17 10V13Q12 15 8 14.500V18H5V13.500L3 13Z" fill="#e2231a" />
            </svg>
          </TrayButton>
          <TrayButton $w={32} aria-label="网络">
            <svg width="20" height="20" fill="none" stroke="#aaa" strokeWidth="1.5"><path d="M1 19C1 9 8 1 19 1M6 19C6 11 12 6 19 6M10.500 19C11 14 14 11 19 11" /><path d="M15 19C15 17 17 15.500 19 15.500V19Z" fill="#fff" stroke="#fff" /></svg>
          </TrayButton>
          <TrayButton $w={38} aria-label="电池">
            <svg width="25" height="18" fill="none" stroke="#fff" strokeWidth="1.4"><path d="M7 3.500H22V16H5V12M22 7.500H24V12.500H22M2 1V4M6 1V4M1 4H7V7Q7 9 4 9T1 7ZM4 9V15" /><path d="M9 6H20V14H7V11L9 8Z" fill="#fff" /></svg>
          </TrayButton>
          <TrayButton $w={33} aria-label="音量">
            <svg width="22" height="18" fill="none" stroke="#fff" strokeWidth="1.4"><path d="M1 6H4L9 1V17L4 12H1ZM14 6 20 12M20 6 14 12" /></svg>
          </TrayButton>
          <TrayButton $w={40} aria-label="输入法">英</TrayButton>
          <TrayButton $w={50} aria-label="搜狗">
            <svg width="26" height="24" viewBox="0 0 26 24">
              <path d="M3 3 20 0Q24 0 24 3L25 17Q25 21 21 21L7 24Q3 24 3 20L1 6Q1 4 3 3Z" fill="#f4511e" />
              <path d="M19 7C14 4 7 5 8 9S19 11 18 15 10 19 6 16" fill="none" stroke="#fff" strokeWidth="3.6" />
            </svg>
          </TrayButton>
          <Clock>21:45</Clock>
          <TrayButton $w={66} aria-label="通知">
            <svg width="26" height="24" fill="none" stroke="#fff" strokeWidth="1.5"><path d="M1 1H24V19H16.500L12.500 23 8.500 19H1Z" /></svg>
          </TrayButton>
          <ShowDesktop aria-label="显示桌面" />
        </Tray>
      </Taskbar>
    </Page>
  );
}
